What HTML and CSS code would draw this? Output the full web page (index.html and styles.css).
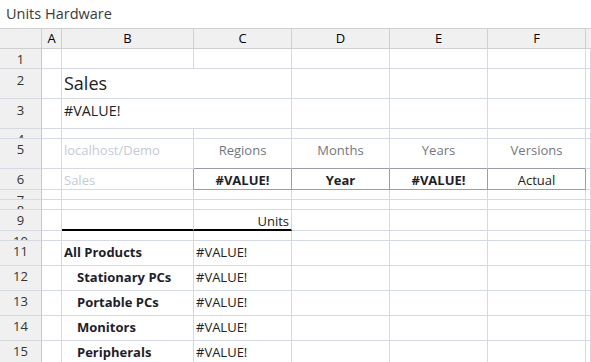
FILE: index.html
```html
<!DOCTYPE html>
<html>
<head>
<meta charset="utf-8">
<link rel="stylesheet" href="styles.css">
</head>
<body>
<div class="title">Units Hardware</div>
<div class="sheet">
  <div class="ch"></div><div class="ch">A</div><div class="ch">B</div><div class="ch">C</div><div class="ch">D</div><div class="ch">E</div><div class="ch">F</div><div class="ch last"></div>

  <div class="rh">1</div><div class="c"></div><div class="c"></div><div class="c"></div><div class="c"></div><div class="c"></div><div class="c"></div><div class="c"></div>

  <div class="rh tall">2</div><div class="c"></div><div class="c span2 big">Sales</div><div class="c"></div><div class="c"></div><div class="c"></div><div class="c"></div>

  <div class="rh tall">3</div><div class="c"></div><div class="c span2 mid">#VALUE!</div><div class="c"></div><div class="c"></div><div class="c"></div><div class="c"></div>

  <div class="rh">4</div><div class="c"></div><div class="c"></div><div class="c"></div><div class="c"></div><div class="c"></div><div class="c"></div><div class="c"></div>

  <div class="rh">5</div><div class="c"></div><div class="c faint">localhost/Demo</div><div class="c dim ctr boxtop">Regions</div><div class="c dim ctr boxtop">Months</div><div class="c dim ctr boxtop">Years</div><div class="c dim ctr boxtop">Versions</div><div class="c"></div>

  <div class="rh">6</div><div class="c"></div><div class="c faint boxleft">Sales</div><div class="c ctr bold box">#VALUE!</div><div class="c ctr bold box">Year</div><div class="c ctr bold box">#VALUE!</div><div class="c ctr box">Actual</div><div class="c"></div>

  <div class="rh">7</div><div class="c"></div><div class="c"></div><div class="c"></div><div class="c"></div><div class="c"></div><div class="c"></div><div class="c"></div>

  <div class="rh">8</div><div class="c"></div><div class="c"></div><div class="c"></div><div class="c"></div><div class="c"></div><div class="c"></div><div class="c"></div>

  <div class="rh">9</div><div class="c"></div><div class="c thick"></div><div class="c thick right">Units</div><div class="c"></div><div class="c"></div><div class="c"></div><div class="c"></div>

  <div class="rh">10</div><div class="c"></div><div class="c"></div><div class="c"></div><div class="c"></div><div class="c"></div><div class="c"></div><div class="c"></div>

  <div class="rh">11</div><div class="c"></div><div class="c bold">All Products</div><div class="c">#VALUE!</div><div class="c"></div><div class="c"></div><div class="c"></div><div class="c"></div>

  <div class="rh">12</div><div class="c"></div><div class="c bold indent">Stationary PCs</div><div class="c">#VALUE!</div><div class="c"></div><div class="c"></div><div class="c"></div><div class="c"></div>

  <div class="rh">13</div><div class="c"></div><div class="c bold indent">Portable PCs</div><div class="c">#VALUE!</div><div class="c"></div><div class="c"></div><div class="c"></div><div class="c"></div>

  <div class="rh">14</div><div class="c"></div><div class="c bold indent">Monitors</div><div class="c">#VALUE!</div><div class="c"></div><div class="c"></div><div class="c"></div><div class="c"></div>

  <div class="rh">15</div><div class="c"></div><div class="c bold indent">Peripherals</div><div class="c">#VALUE!</div><div class="c"></div><div class="c"></div><div class="c"></div><div class="c"></div>
</div>
</body>
</html>
```
FILE: styles.css
```css
html, body {
  margin: 0;
  padding: 0;
  background: #fff;
}
body {
  width: 591px;
  height: 362px;
  overflow: hidden;
  font-family: "Open Sans", "Noto Sans", sans-serif;
}
.title {
  height: 28px;
  line-height: 28px;
  padding-left: 6px;
  font-size: 14.5px;
  color: #3a3a3a;
}
.sheet {
  display: grid;
  grid-template-columns: 42px 20px 132px 98px 98px 98px 98px 1fr;
  grid-template-rows: 20px 20px 30px 30px 10px 30px 21px 10px 10px 21px 10px 25px 25px 25px 25px 25px;
  border-top: 1px solid #d0d0d0;
  width: 591px;
}
.sheet > div {
  box-sizing: border-box;
  overflow: hidden;
  white-space: nowrap;
}
.ch {
  background: #f0f0f0;
  border-right: 1px solid #cfcfcf;
  border-bottom: 1px solid #cfcfcf;
  font-size: 13px;
  line-height: 19px;
  text-align: center;
  color: #000;
}
.ch.last {
  border-right: none;
}
.rh {
  background: #f0f0f0;
  border-right: 1px solid #c8c8c8;
  border-bottom: 1px solid #d6d9df;
  font-size: 13px;
  line-height: 18px;
  padding-top: 1px;
  text-align: center;
  color: #333;
}
.rh.tall {
  padding-top: 2px;
}
.c {
  border-right: 1px solid #d4d9e3;
  border-bottom: 1px solid #d4d9e3;
  font-size: 13px;
  line-height: 18px;
  padding: 2px 2px 0 2px;
  color: #222;
}
.span2 {
  grid-column: span 2;
}
.big {
  font-size: 18px;
  line-height: 24px;
  padding-top: 2px;
}
.mid {
  font-size: 14.3px;
  line-height: 20px;
  padding-top: 2px;
}
.faint {
  color: #c4cad6;
}
.dim {
  color: #737880;
}
.ctr {
  text-align: center;
}
.right {
  text-align: right;
}
.bold {
  font-weight: 700;
  color: #1e1e2a;
}
.indent {
  padding-left: 15px;
}
.boxtop {
  border-bottom-color: #9a9ea6;
}
.boxleft {
  border-right-color: #9a9ea6;
}
.box {
  border-right-color: #9a9ea6;
  border-bottom-color: #9a9ea6;
}
.thick {
  border-bottom: 2px solid #000;
}
```
